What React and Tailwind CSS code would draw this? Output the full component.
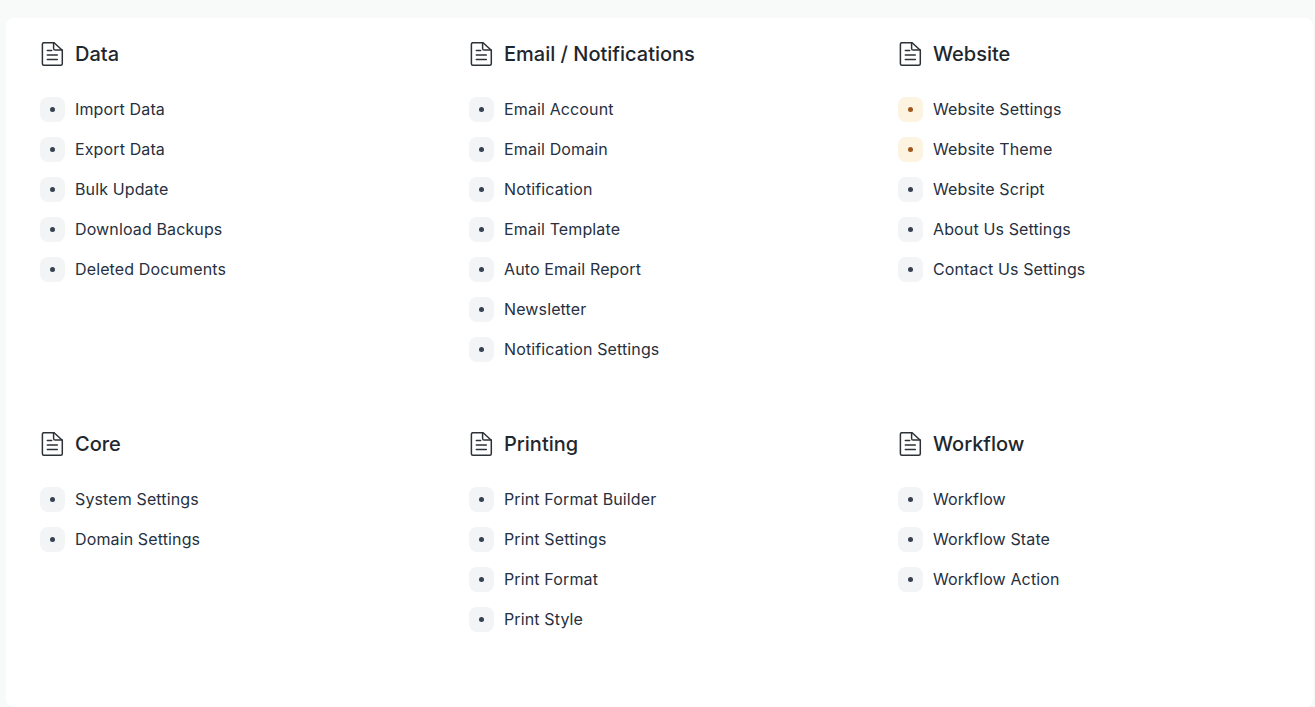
import React from "react";

const SECTIONS = [
  {
    title: "Data",
    items: ["Import Data", "Export Data", "Bulk Update", "Download Backups", "Deleted Documents"],
  },
  {
    title: "Email / Notifications",
    items: [
      "Email Account",
      "Email Domain",
      "Notification",
      "Email Template",
      "Auto Email Report",
      "Newsletter",
      "Notification Settings",
    ],
  },
  {
    title: "Website",
    items: ["Website Settings", "Website Theme", "Website Script", "About Us Settings", "Contact Us Settings"],
    highlighted: ["Website Settings", "Website Theme"],
  },
  { title: "Core", items: ["System Settings", "Domain Settings"] },
  { title: "Printing", items: ["Print Format Builder", "Print Settings", "Print Format", "Print Style"] },
  { title: "Workflow", items: ["Workflow", "Workflow State", "Workflow Action"] },
];

function DocIcon() {
  return (
    <svg width="24" height="24" viewBox="0 0 24 24" fill="none" stroke="#2c3238" strokeWidth="1.5" strokeLinecap="round" strokeLinejoin="round" className="shrink-0">
      <path d="M2.4 2.2a1.5 1.5 0 0 1 1.5-1.5h10.2l8.2 7.6v13.4a1.5 1.5 0 0 1-1.5 1.5H3.9a1.5 1.5 0 0 1-1.5-1.5z" />
      <path d="M13.6 0.9v5.6a1.6 1.6 0 0 0 1.6 1.6h7" />
      <path d="M7.3 8.6h4.4" />
      <path d="M7.3 13h10" />
      <path d="M7.3 17.4h10" />
    </svg>
  );
}

function Item({ label, active }) {
  return (
    <a className="flex h-[25px] items-center gap-[10px] text-base leading-[23px] tracking-[0.008em] text-[#263040]">
      <span className={`flex size-[25px] items-center justify-center rounded-lg ${active ? "bg-[#fdf3e1]" : "bg-[#f3f4f6]"}`}>
        <span className={`size-[5px] rounded-full ${active ? "bg-[#a0581d]" : "bg-[#374151]"}`} />
      </span>
      {label}
    </a>
  );
}

function Section({ title, items, highlighted = [] }) {
  return (
    <div className="h-[390px]">
      <div className="flex h-[24px] items-center gap-[11px] text-[20px] font-[450] text-[#1f272e]">
        <DocIcon />
        {title}
      </div>
      <div className="mt-[31px] flex flex-col gap-[15px]">
        {items.map((label) => (
          <Item key={label} label={label} active={highlighted.includes(label)} />
        ))}
      </div>
    </div>
  );
}

export default function App() {
  return (
    <div className="h-[707px] overflow-hidden bg-[#f8f9f9] pt-[18px] pl-[6px] pr-[2px] font-['Inter',sans-serif]">
      <div className="h-[689px] rounded-lg bg-white pt-6 pl-[34px]">
        <div className="grid grid-cols-[429px_429px_1fr]">
          {SECTIONS.map((s) => (
            <Section key={s.title} {...s} />
          ))}
        </div>
      </div>
    </div>
  );
}
